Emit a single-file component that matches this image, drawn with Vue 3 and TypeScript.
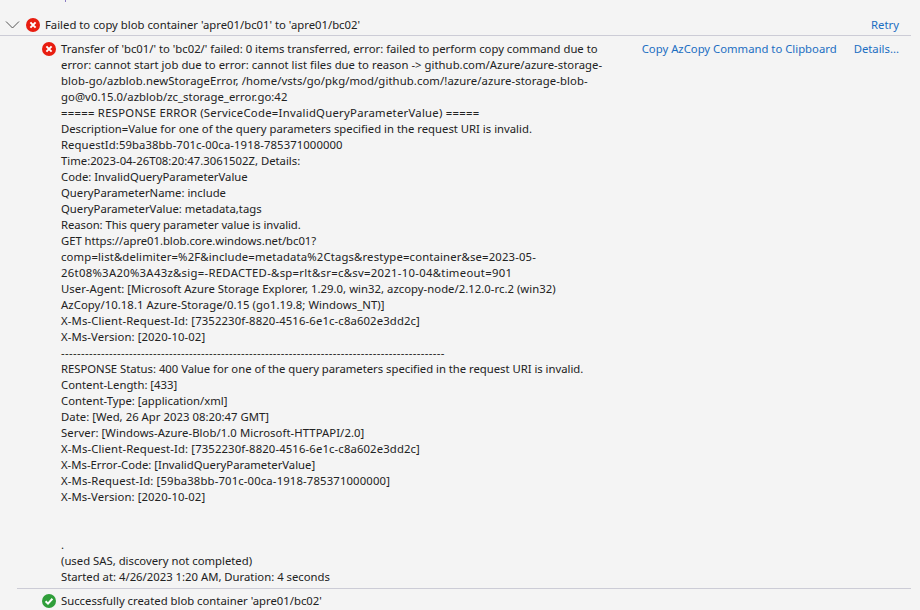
<script setup lang="ts">
interface Line { t: string; ls?: number }
const lines: Line[] = [
  { t: "Transfer of 'bc01/' to 'bc02/' failed: 0 items transferred, error: failed to perform copy command due to" },
  { t: "error: cannot start job due to error: cannot list files due to reason -> github.com/Azure/azure-storage-", ls: 0.03 },
  { t: "blob-go/azblob.newStorageError, /home/vsts/go/pkg/mod/github.com/!azure/azure-storage-blob-", ls: 0.09 },
  { t: "go@v0.15.0/azblob/zc_storage_error.go:42", ls: 0.05 },
  { t: "===== RESPONSE ERROR (ServiceCode=InvalidQueryParameterValue) =====", ls: 0.27 },
  { t: "Description=Value for one of the query parameters specified in the request URI is invalid." },
  { t: "RequestId:59ba38bb-701c-00ca-1918-785371000000", ls: 0.09 },
  { t: "Time:2023-04-26T08:20:47.3061502Z, Details:" },
  { t: "Code: InvalidQueryParameterValue" },
  { t: "QueryParameterName: include" },
  { t: "QueryParameterValue: metadata,tags" },
  { t: "Reason: This query parameter value is invalid.", ls: -0.06 },
  { t: "GET https://apre01.blob.core.windows.net/bc01?", ls: -0.04 },
  { t: "comp=list&delimiter=%2F&include=metadata%2Ctags&restype=container&se=2023-05-", ls: 0.155 },
  { t: "26t08%3A20%3A43z&sig=-REDACTED-&sp=rlt&sr=c&sv=2021-10-04&timeout=901", ls: 0.3 },
  { t: "User-Agent: [Microsoft Azure Storage Explorer, 1.29.0, win32, azcopy-node/2.12.0-rc.2 (win32)", ls: 0.03 },
  { t: "AzCopy/10.18.1 Azure-Storage/0.15 (go1.19.8; Windows_NT)]", ls: 0.07 },
  { t: "X-Ms-Client-Request-Id: [7352230f-8820-4516-6e1c-c8a602e3dd2c]", ls: 0.13 },
  { t: "X-Ms-Version: [2020-10-02]", ls: 0.1 },
  { t: "-".repeat(96), ls: 0.36 },
  { t: "RESPONSE Status: 400 Value for one of the query parameters specified in the request URI is invalid.", ls: -0.02 },
  { t: "Content-Length: [433]" },
  { t: "Content-Type: [application/xml]" },
  { t: "Date: [Wed, 26 Apr 2023 08:20:47 GMT]", ls: 0.03 },
  { t: "Server: [Windows-Azure-Blob/1.0 Microsoft-HTTPAPI/2.0]", ls: 0.07 },
  { t: "X-Ms-Client-Request-Id: [7352230f-8820-4516-6e1c-c8a602e3dd2c]", ls: 0.13 },
  { t: "X-Ms-Error-Code: [InvalidQueryParameterValue]" },
  { t: "X-Ms-Request-Id: [59ba38bb-701c-00ca-1918-785371000000]", ls: 0.145 },
  { t: "X-Ms-Version: [2020-10-02]", ls: 0.1 },
  { t: "\u00a0" },
  { t: "\u00a0" },
  { t: "." },
  { t: "(used SAS, discovery not completed)" },
  { t: "Started at: 4/26/2023 1:20 AM, Duration: 4 seconds" },
];
</script>

<template>
  <div class="page">
    <div class="sliver"></div>
    <div class="header">
      <svg class="chev" width="16" height="10" viewBox="0 0 16 10"><path d="M1 1.5 L7.5 8 L14 1.5" fill="none" stroke="#555" stroke-width="1" /></svg>
      <svg class="ico" width="14" height="14" viewBox="0 0 14 14"><circle cx="7" cy="7" r="7" fill="#e81d10" /><path d="M4.4 4.4 L9.6 9.6 M9.6 4.4 L4.4 9.6" stroke="#fff" stroke-width="2" /></svg>
      <span class="title">Failed to copy blob container 'apre01/bc01' to 'apre01/bc02'</span>
      <a class="link retry">Retry</a>
    </div>
    <div class="detail">
      <svg class="ico detail-ico" width="14" height="14" viewBox="0 0 14 14"><circle cx="7" cy="7" r="7" fill="#e81d10" /><path d="M4.4 4.4 L9.6 9.6 M9.6 4.4 L4.4 9.6" stroke="#fff" stroke-width="2" /></svg>
      <div class="body">
        <div v-for="(l, i) in lines" :key="i" class="line" :style="{ letterSpacing: (l.ls ?? 0) + 'px' }">{{ l.t }}</div>
      </div>
      <div class="actions">
        <a class="link">Copy AzCopy Command to Clipboard</a>
        <a class="link">Details...</a>
      </div>
    </div>
    <div class="footer">
      <svg class="ico" width="14" height="14" viewBox="0 0 14 14"><circle cx="7" cy="7" r="7" fill="#2f9e3a" /><path d="M3.6 7.2 L6 9.6 L10.4 4.8" fill="none" stroke="#fff" stroke-width="2" /></svg>
      <span class="title">Successfully created blob container 'apre01/bc02'</span>
    </div>
  </div>
</template>

<style>
html, body { margin: 0; background: #f4f4f4; }
</style>

<style scoped>
.page {
  width: 920px;
  height: 610px;
  overflow: hidden;
  background: #f4f4f4;
  color: #222;
  font-family: "Noto Sans", "Open Sans", sans-serif;
  font-size: 11.3px;
  line-height: 16px;
  padding: 0 9px 0 0;
  box-sizing: border-box;
}
.sliver {
  width: 1px;
  height: 2px;
  margin: 0 0 12px 65px;
  background: #8a7cc4;
}
.header {
  display: flex;
  align-items: center;
  height: 21px;
  border-bottom: 1px solid #ccccd6;
  padding-right: 12px;
  padding-left: 5px;
}
.chev { margin-right: 5px; }
.ico { flex: none; }
.title { margin-left: 5px; }
.retry { margin-left: auto; }
.link { color: #1b6ec2; }
.detail {
  display: flex;
  margin-left: 17px;
  padding-top: 5px;
  height: 553px;
  box-sizing: border-box;
  border-bottom: 1px solid #ccccd6;
  padding-right: 12px;
}
.detail-ico { margin: 1px 5px 0 25px; }
.body { width: 560px; white-space: nowrap; }
.actions {
  display: flex;
  gap: 17px;
  margin-left: auto;
  height: 16px;
}
.footer {
  display: flex;
  align-items: center;
  height: 24px;
  padding-left: 42px;
}
</style>
